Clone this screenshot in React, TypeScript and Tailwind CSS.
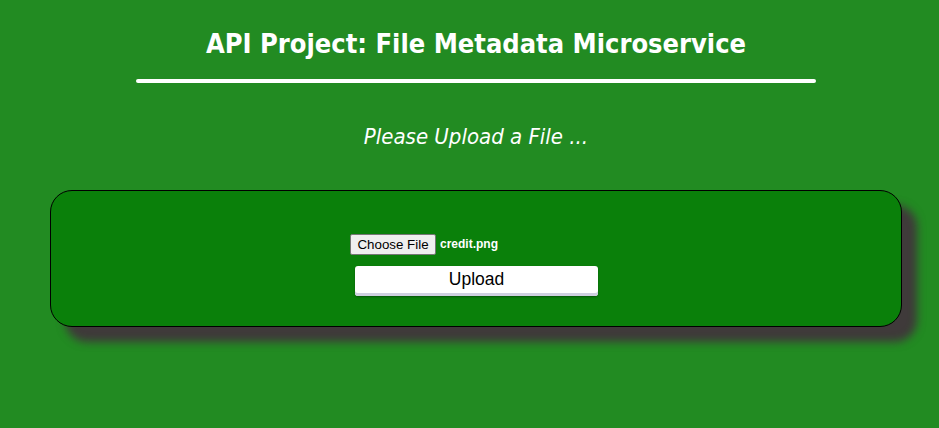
import React from "react";

export default function App() {
  return (
    <div className="min-h-[428px] w-full bg-[#228b22] pl-[13px] overflow-hidden" style={{ fontFamily: '"DejaVu Sans Condensed", "DejaVu Sans", sans-serif' }}>
      <div className="flex flex-col items-center">
        <h1 className="mt-[28px] text-[27px] leading-[32px] font-bold text-white">API Project: File Metadata Microservice</h1>
        <div className="mt-[19px] h-[4px] w-[680px] rounded-full bg-white" />
        <p className="mt-[40px] text-[22px] leading-[28px] italic text-white">Please Upload a File ...</p>
        <div className="mt-[39px] flex h-[137px] w-[852px] flex-col justify-center rounded-[22px] border border-black bg-[#0a800a] shadow-[15px_15px_9px_#3f3a3a]">
          <div className="mt-[12px] ml-[299px] flex items-center" style={{ fontFamily: '"Liberation Sans", Arial, sans-serif' }}>
            <button className="h-[21px] w-[86px] rounded-[2px] border border-[#767676] bg-[#efefef] text-[13.33px] leading-[19px] text-black">Choose File</button>
            <span className="ml-[4px] text-[12px] font-bold text-white">credit.png</span>
          </div>
          <button className="mt-[11px] ml-[304px] h-[30px] w-[243px] rounded-[3px] bg-white pb-[3px] text-[17.5px] leading-[20px] text-black shadow-[inset_0_-3px_0_#cfd0e0,0_1px_2px_rgba(0,0,0,0.35)]" style={{ fontFamily: '"Liberation Sans", Arial, sans-serif' }}>Upload</button>
        </div>
      </div>
    </div>
  );
}
